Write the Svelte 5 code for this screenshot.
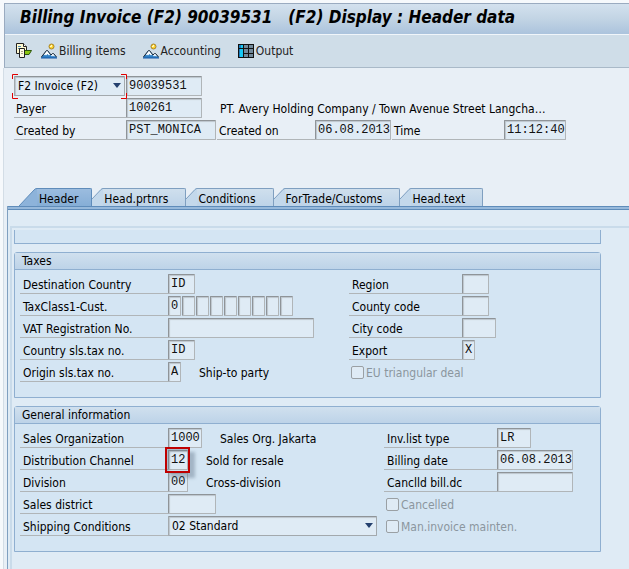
<script>
    const tabs = ["Header", "Head.prtnrs", "Conditions", "ForTrade/Customs", "Head.text"];
    let active = $state("Header");

    let docType = $state("F2 Invoice (F2)");
    let shipping = $state("02 Standard");

    const taxesLeft = [
        { id: "dest", label: "Destination Country", value: "ID", size: "w2" },
        { id: "taxclass", label: "TaxClass1-Cust.", cells: ["0", "", "", "", "", "", "", "", ""] },
        { id: "vat", label: "VAT Registration No.", value: "", size: "w20" },
        { id: "country", label: "Country sls.tax no.", value: "ID", size: "w2" },
        { id: "origin", label: "Origin sls.tax no.", value: "A", size: "w1", text: "Ship-to party" }
    ];

    const taxesRight = [
        { id: "region", label: "Region", value: "", size: "w2" },
        { id: "county", label: "County code", value: "", size: "w2" },
        { id: "city", label: "City code", value: "", size: "w4" },
        { id: "export", label: "Export", value: "X", size: "w1" },
        { id: "eu", label: "EU triangular deal", check: true }
    ];

    const generalLeft = [
        { id: "org", label: "Sales Organization", value: "1000", size: "w4", text: "Sales Org. Jakarta" },
        { id: "channel", label: "Distribution Channel", value: "12", size: "wn", text: "Sold for resale", marked: true },
        { id: "division", label: "Division", value: "00", size: "wn", text: "Cross-division" },
        { id: "district", label: "Sales district", value: "", size: "w6" },
        { id: "shipping", label: "Shipping Conditions", select: true }
    ];

    const generalRight = [
        { id: "listtype", label: "Inv.list type", value: "LR", size: "w4" },
        { id: "billdate", label: "Billing date", value: "06.08.2013", size: "w10" },
        { id: "cancdoc", label: "Canclld bill.dc", value: "", size: "w10" },
        { id: "cancelled", label: "Cancelled", check: true },
        { id: "manual", label: "Man.invoice mainten.", check: true }
    ];
</script>

{#snippet mountain()}
    <svg width="16" height="16" viewBox="0 0 16 16">
        <path d="M0 15L5 8h2l3 4 1-1h2l3 4z" fill="#2f7fc4" />
        <path d="M3 11.500L5.500 8h1L9 11.500l-1 1-1.500-1.500L5 12.500 4 11.500 3 12.500zM10 12.500l1.500-1.500h1l1.500 2-1 .5-1-1-1 1z" fill="#fff" />
        <path d="M0 14.500L5.500 7.500h1L10 12l1.500-1.500h1L16 14.500" fill="none" stroke="#1c2836" />
        <path d="M0 15h16" stroke="#1759a8" stroke-width="1" />
        <circle cx="10.500" cy="3.500" r="2.500" fill="#ffd42e" stroke="#a8842a" />
        <path d="M9 3.500h1.500V2" stroke="#fffbd0" fill="none" />
    </svg>
{/snippet}

{#snippet row(r)}
    <div class="row">
        {#if r.check}
            <input class="check" type="checkbox" id={r.id} disabled />
            <label class="check-label" for={r.id}>{r.label}</label>
        {:else}
            <label class="label" for={r.id}>{r.label}</label>
            {#if r.cells}
                <div class="cells">
                    {#each r.cells as cell, i}
                        <input class="field w1" id={i === 0 ? r.id : null} aria-label="{r.label} {i + 1}" value={cell} readonly />
                    {/each}
                </div>
            {:else if r.select}
                <div class="select wide">
                    <select id={r.id} bind:value={shipping}>
                        <option>02 Standard</option>
                    </select>
                </div>
            {:else}
                <div class="holder">
                    <input class="field {r.size}" id={r.id} value={r.value} readonly />
                    {#if r.marked}
                        <div class="mark"></div>
                    {/if}
                </div>
            {/if}
            {#if r.text}
                <span class="text">{r.text}</span>
            {/if}
        {/if}
    </div>
{/snippet}

<div class="window">
    <header>
        <h1>Billing Invoice (F2) 90039531   (F2) Display : Header data</h1>
        <div class="toolbar">
            <button aria-label="Display document">
                <svg width="16" height="16" viewBox="0 0 16 16">
                    <path d="M.5.5h7l3 3v7h-10z" fill="#fff9d0" stroke="#222" />
                    <path d="M7.500.5v3h3" fill="#fff" stroke="#222" />
                    <path d="M2 3.500h3M2 5.500h2" stroke="#4d87b5" />
                    <path d="M8 7.500h7.500L13 11.500H8z" fill="#8bc510" stroke="#2d570d" />
                    <path d="M3.500 5.500h5v9h-5z" fill="#fffce4" stroke="#222" />
                    <path d="M5 8.500h2M5 10.500h2" stroke="#a9a583" />
                </svg>
            </button>
            <button>{@render mountain()}Billing items</button>
            <button>{@render mountain()}Accounting</button>
            <button>
                <svg width="16" height="16" viewBox="0 0 16 16">
                    <path d="M0 1h16v14H0z" fill="#111" />
                    <path d="M1 2h4v3H1zM1 6h4v8H1z" fill="#18c8f4" />
                    <path d="M1 2h2v3H1zM1 6h1v8H1z" fill="#167dc0" />
                    <path d="M6 2h4v3H6zM11 2h4v3h-4zM6 6h4v4H6zM11 6h4v4h-4zM6 11h4v3H6zM11 11h4v3h-4z" fill="#71899b" />
                </svg>
                Output
            </button>
        </div>
    </header>

    <main>
        <div class="document">
            <div class="row">
                <div class="select doc">
                    <select aria-label="Document type" bind:value={docType}>
                        <option>F2 Invoice (F2)</option>
                    </select>
                    <svg class="focus" width="115" height="25" viewBox="0 0 115 25">
                        <path d="M.5 5V.5H6M109 .5h5.500V5M.5 19v5.500H6M109 24.500h5.500V19" fill="none" stroke="#e00000" />
                    </svg>
                </div>
                <input class="field w10" aria-label="Document number" value="90039531" readonly />
            </div>
            <div class="row">
                <label class="label" for="payer">Payer</label>
                <input class="field w10" id="payer" value="100261" readonly />
                <span class="text">PT. Avery Holding Company / Town Avenue Street Langcha…</span>
            </div>
            <div class="row">
                <label class="label" for="by">Created by</label>
                <input class="field w12" id="by" value="PST_MONICA" readonly />
                <label class="label next short" for="on">Created on</label>
                <input class="field w10" id="on" value="06.08.2013" readonly />
                <label class="label next" for="time">Time</label>
                <input class="field w8" id="time" value="11:12:40" readonly />
            </div>
        </div>

        <div class="tabs" role="tablist">
            {#each tabs as tab}
                <button class="tab" class:active={tab === active} role="tab" aria-selected={tab === active} onclick={() => (active = tab)}>
                    {#if tab === active}
                        <svg width="18" height="18" viewBox="0 0 18 18">
                            <path d="M0 18L15 2Q17 0 18 0V18z" fill="#8db3da" />
                            <path d="M0 18L15 2Q16 .5 18 .5" fill="none" stroke="#5f8cba" />
                        </svg>
                    {:else}
                        <svg width="11" height="18" viewBox="0 0 11 18">
                            <path d="M0 11L9 1Q10 0 11 0V18H0z" fill="#c3d8eb" />
                            <path d="M0 11L9 1.500Q10 .5 11 .5" fill="none" stroke="#7f9fc0" />
                        </svg>
                    {/if}
                    <span>{tab}</span>
                </button>
            {/each}
        </div>

        <div class="panel">
            <div class="scroll">
                <div class="cut"></div>

                <section class="group">
                    <h2>Taxes</h2>
                    <div class="columns taxes">
                        <div class="column">
                            {#each taxesLeft as r}
                                {@render row(r)}
                            {/each}
                        </div>
                        <div class="column right">
                            {#each taxesRight as r}
                                {@render row(r)}
                            {/each}
                        </div>
                    </div>
                </section>

                <section class="group">
                    <h2>General information</h2>
                    <div class="columns general">
                        <div class="column">
                            {#each generalLeft as r}
                                {@render row(r)}
                            {/each}
                        </div>
                        <div class="column right">
                            {#each generalRight as r}
                                {@render row(r)}
                            {/each}
                        </div>
                    </div>
                </section>
            </div>
        </div>
    </main>
</div>

<style>
    :global(body) {
        background: #f6f9fc;
    }

    * {
        box-sizing: border-box;
    }

    .window {
        display: flex;
        flex-direction: column;
        min-height: 100vh;
        padding: 3px 0 0 3px;
        color: #000;
        font-family: "DejaVu Sans Condensed", "DejaVu Sans", sans-serif;
        font-size: 12px;
        line-height: 16px;
        white-space: nowrap;
    }

    button, select {
        font: inherit;
        color: inherit;
        margin: 0;
    }

    header {
        margin-left: 1px;
        border-top: 1px solid #9aabc0;
        border-left: 1px solid #9aabc0;
        border-bottom: 1px solid #a9b9c8;
    }

    h1 {
        margin: 0;
        height: 31px;
        padding-left: 15px;
        border-bottom: 1px solid #f0f5fa;
        background: linear-gradient(#d3e1ee, #c2d4e4 50%, #abc3dd);
        font-size: 17px;
        font-style: italic;
        line-height: 26px;
        white-space: pre;
    }

    .toolbar {
        display: flex;
        align-items: center;
        height: 32px;
        padding-left: 11px;
        background: #cfdde8;
    }

    .toolbar button {
        display: flex;
        align-items: center;
        gap: 2px;
        padding: 0;
        margin-right: 17px;
        border: none;
        background: none;
        color: #222;
    }

    .toolbar button:first-child {
        margin-right: 9px;
    }

    main {
        display: flex;
        flex-direction: column;
        flex: 1;
        border-left: 1px solid #d3dde6;
        background: #e8eff6;
    }

    .document {
        display: flex;
        flex-direction: column;
        gap: 2px;
        padding: 8px 0 0 10px;
    }

    .row {
        display: flex;
        height: 20px;
    }

    .label {
        width: 112px;
        padding: 3px 0 0 2px;
        border-bottom: 1px solid #b0b5b8;
    }

    .label.next {
        margin-left: 1px;
    }

    .label.short {
        width: 98px;
    }

    .group .label {
        width: 148px;
        padding-left: 3px;
    }

    .group .right .label {
        width: 113px;
    }

    .text {
        margin-left: 18px;
        padding-top: 3px;
    }

    .field {
        height: 20px;
        margin: 0;
        padding: 0 0 1px 2px;
        border: 1px solid #b0b5b8;
        border-top-color: #8f9498;
        border-left-color: #8f9498;
        border-radius: 1px;
        outline: none;
        background: #dfebf5;
        box-shadow: inset 1px 1px 1px #bcc5cc;
        color: #111;
        font-family: "Liberation Mono", monospace;
        font-size: 12px;
    }

    .w1 { width: 13px; }
    .wn { width: 20px; }
    .w2 { width: 27px; }
    .w4 { width: 34px; }
    .w6 { width: 48px; }
    .w8 { width: 62px; }
    .w10 { width: 76px; }
    .w12 { width: 90px; }
    .w20 { width: 146px; }

    .cells {
        display: flex;
        gap: 1px;
    }

    .holder {
        position: relative;
        display: flex;
    }

    .mark {
        position: absolute;
        top: -3px;
        left: -3px;
        width: 25px;
        height: 26px;
        border: 2px solid #c00000;
        box-shadow: 5px 5px 3px rgba(90, 110, 130, 0.4), inset 2px 2px 3px rgba(90, 110, 130, 0.4);
        pointer-events: none;
        z-index: 1;
    }

    .select {
        position: relative;
        width: 111px;
        margin-right: 1px;
    }

    .select.wide {
        width: 209px;
    }

    .select select {
        width: 100%;
        height: 20px;
        padding: 0 16px 1px 3px;
        appearance: none;
        border: 1px solid #a3a9ad;
        border-top-color: #8f9498;
        border-radius: 1px;
        background: #dfebf5;
        box-shadow: inset 1px 1px 1px #bcc5cc;
    }

    .select::after {
        content: "";
        position: absolute;
        top: 7px;
        right: 4px;
        border: 4px solid transparent;
        border-top: 5px solid #24406e;
        border-bottom: none;
        pointer-events: none;
    }

    .focus {
        position: absolute;
        top: -2px;
        left: -2px;
        pointer-events: none;
    }

    .tabs {
        display: flex;
        margin-top: 48px;
        padding-left: 15px;
    }

    .tab {
        display: flex;
        height: 18px;
        padding: 0;
        border: none;
        background: none;
    }

    .tab svg {
        flex: none;
    }

    .tab span {
        padding: 2px 17px 0 1px;
        border-top: 1px solid #7f9fc0;
        border-right: 1px solid #7f9fc0;
        border-top-right-radius: 2px;
        background: linear-gradient(#cfdfed, #bdd3e8);
    }

    .tab.active span {
        padding-right: 13px;
        padding-left: 2px;
        border-color: #5f8cba;
        background: linear-gradient(#9bbcdf, #86aed6);
    }

    .panel {
        display: flex;
        flex: 1;
        margin-left: 3px;
        padding: 20px 0 0 2px;
        border-left: 1px solid #7f9fc0;
        background: linear-gradient(#5f8cba 1px, #97b9db 1px, #97b9db 3px, #5f8cba 3px, #5f8cba 4px, #dfebf5 4px);
    }

    .scroll {
        flex: 1;
        display: flex;
        flex-direction: column;
        gap: 8px;
        padding: 2px 28px 17px 2px;
        border-top: 2px solid #c9dbea;
        border-left: 2px solid #c9dbea;
    }

    .cut {
        height: 14px;
        border: 1px solid #8fafd0;
        border-top: none;
        background: #d4e5f3;
    }

    .group {
        border: 1px solid #8fafd0;
        border-radius: 3px 3px 0 0;
        background: #d4e5f3;
    }

    h2 {
        height: 17px;
        margin: 0;
        padding-left: 7px;
        border-bottom: 1px solid #8fafd0;
        background: linear-gradient(#d0e0ee, #bdd3e8);
        font-size: 12px;
        font-weight: normal;
    }

    .columns {
        display: grid;
        padding: 4px 0 15px 5px;
    }

    .taxes {
        grid-template-columns: 329px 1fr;
    }

    .general {
        grid-template-columns: 364px 1fr;
    }

    .column {
        display: flex;
        flex-direction: column;
        gap: 2px;
    }

    .check {
        width: 13px;
        height: 13px;
        margin: 4px 2px 0 2px;
        appearance: none;
        border: 1px solid #9aa0a4;
        border-radius: 2px;
        background: #dfebf5;
    }

    .check-label {
        padding-top: 3px;
        color: #8b969e;
    }
</style>
